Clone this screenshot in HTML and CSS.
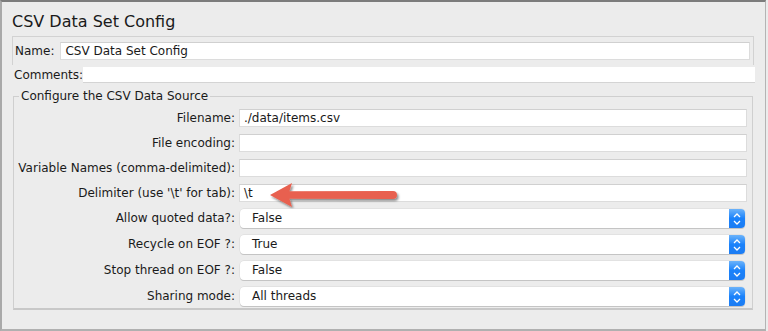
FILE: index.html
```html
<!DOCTYPE html>
<html>
<head>
<meta charset="utf-8">
<link rel="stylesheet" href="styles.css">
</head>
<body>
<div class="window">
  <div class="title">CSV Data Set Config</div>
  <div class="name-panel">
    <div class="name-row">
      <span class="lbl">Name:</span>
      <div class="field name-field">CSV Data Set Config</div>
    </div>
  </div>
  <div class="comments-row">
    <span class="lbl">Comments:</span>
    <div class="field comments-field"></div>
  </div>
  <div class="group">
    <div class="legend">Configure the CSV Data Source</div>
    <div class="grid">
      <div class="glabel">Filename:</div>
      <div class="field gfield">./data/items.csv</div>
      <div class="glabel">File encoding:</div>
      <div class="field gfield"></div>
      <div class="glabel">Variable Names (comma-delimited):</div>
      <div class="field gfield"></div>
      <div class="glabel">Delimiter (use '\t' for tab):</div>
      <div class="field gfield delim">\t
        <svg class="arrow" width="140" height="34" viewBox="0 0 140 34">
          <defs>
            <filter id="sh" x="-10%" y="-30%" width="120%" height="160%">
              <feDropShadow dx="1.5" dy="2" stdDeviation="1.2" flood-color="#000" flood-opacity="0.45"/>
            </filter>
          </defs>
          <g filter="url(#sh)">
            <path d="M1 16 L23 4 L20.5 12.2 L124 12 Q128 12 128 16 Q128 20 124 20 L20.5 19.8 L23 28 Z" fill="#e8614f"/>
          </g>
        </svg>
      </div>
      <div class="glabel sl">Allow quoted data?:</div>
      <div class="select">False<span class="stepper"><svg width="10" height="14" viewBox="0 0 10 14"><path d="M2 5 L5 2 L8 5 M2 9 L5 12 L8 9" stroke="#fff" stroke-width="1.3" fill="none"/></svg></span></div>
      <div class="glabel sl">Recycle on EOF ?:</div>
      <div class="select">True<span class="stepper"><svg width="10" height="14" viewBox="0 0 10 14"><path d="M2 5 L5 2 L8 5 M2 9 L5 12 L8 9" stroke="#fff" stroke-width="1.3" fill="none"/></svg></span></div>
      <div class="glabel sl">Stop thread on EOF ?:</div>
      <div class="select">False<span class="stepper"><svg width="10" height="14" viewBox="0 0 10 14"><path d="M2 5 L5 2 L8 5 M2 9 L5 12 L8 9" stroke="#fff" stroke-width="1.3" fill="none"/></svg></span></div>
      <div class="glabel sl">Sharing mode:</div>
      <div class="select">All threads<span class="stepper"><svg width="10" height="14" viewBox="0 0 10 14"><path d="M2 5 L5 2 L8 5 M2 9 L5 12 L8 9" stroke="#fff" stroke-width="1.3" fill="none"/></svg></span></div>
    </div>
  </div>
</div>
</body>
</html>
```
FILE: styles.css
```css
html, body {
  margin: 0;
  padding: 0;
  background: #ececec;
}
body {
  font-family: "DejaVu Sans", "Liberation Sans", sans-serif;
  font-size: 12px;
  color: #1a1a1a;
}
.window {
  width: 766px;
  height: 331px;
  box-sizing: border-box;
  border-top: 2px solid #7c7c7c;
  border-left: 2px solid #a9a9a9;
  border-right: 1px solid #b4b4b4;
  border-bottom: 2px solid #b0b0b0;
  background: #ececec;
  position: relative;
}
.title {
  font-size: 16px;
  padding: 8px 0 0 10px;
  height: 26px;
  line-height: 23px;
}
.name-panel {
  margin-left: 10px;
  width: 742px;
  height: 29px;
  box-sizing: border-box;
  border: 1px solid #d2d2d2;
  border-bottom: none;
}
.name-row {
  display: flex;
  align-items: center;
  padding: 5px 3px 0 2px;
  gap: 6px;
}
.lbl {
  line-height: 17px;
}
.field {
  background: #fff;
  box-sizing: border-box;
  border: 1px solid #dcdcdc;
  border-top-color: #d0d0d0;
  line-height: 16px;
  height: 18px;
  padding: 0 4px;
}
.name-field {
  flex: 1;
}
.comments-row {
  display: flex;
  align-items: center;
  margin-left: 10px;
  width: 743px;
  height: 16px;
  margin-top: 2px;
  padding-left: 2px;
  box-sizing: border-box;
  gap: 0;
}
.comments-field {
  flex: 1;
  border: none;
  border-bottom: 1px solid #d4d4d4;
  height: 16px;
}
.group {
  margin: 13px 0 0 11px;
  width: 740px;
  height: 214px;
  box-sizing: border-box;
  border: 1px solid #cfcfcf;
  border-bottom: 2px solid #c8c8c8;
  position: relative;
  padding: 12px 5px 0 0;
}
.legend {
  position: absolute;
  top: -9px;
  left: 5px;
  padding: 0 2px;
  background: #ececec;
  line-height: 16px;
}
.grid {
  display: grid;
  grid-template-columns: 221px 1fr;
  column-gap: 4px;
  row-gap: 7px;
  align-items: center;
}
.glabel {
  text-align: right;
  line-height: 18px;
}
.glabel.sl {
  margin-top: -1px;
}
.gfield {
  position: relative;
}
.arrow {
  position: absolute;
  left: 29px;
  top: -6px;
}
.select {
  position: relative;
  background: #fff;
  height: 19px;
  margin-right: 2px;
  margin-left: 1px;
  border-radius: 4px;
  box-shadow: 0 1px 0 #c4c4c4, 0 0 0 0.5px #d8d8d8;
  padding-left: 12px;
  line-height: 18px;
}
.stepper {
  position: absolute;
  right: 0;
  top: 0;
  width: 16px;
  height: 19px;
  border-radius: 0 4px 4px 0;
  background: linear-gradient(#6cb3fa, #1a82fb 50%, #1c7cf2);
  display: flex;
  align-items: center;
  justify-content: center;
}
```
